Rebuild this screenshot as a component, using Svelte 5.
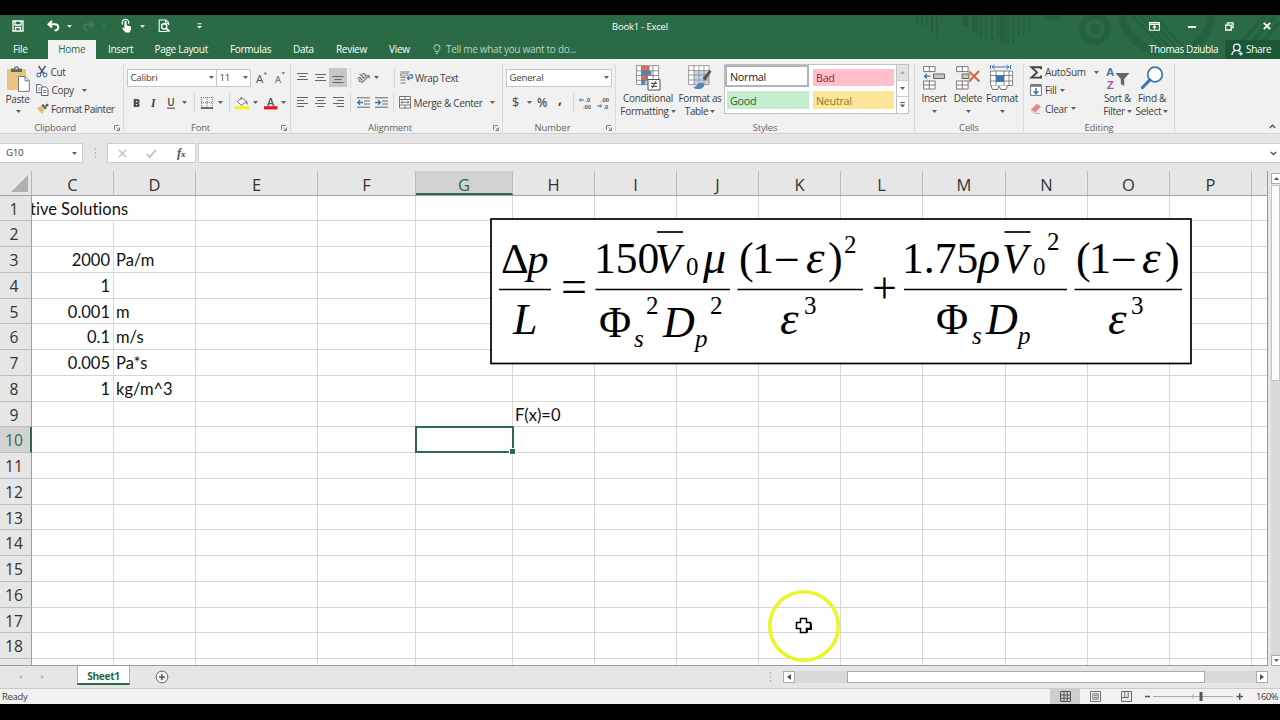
<script>
  const k = '#505050';
  const b = '#3a77b0';
  const caret = `<path d="M0 0h5L2.500 3z" fill="#606060"/>`;
  const lines = (rows) =>
    rows.map(([x1, x2, y]) => `<path d="M${x1} ${y}H${x2}" stroke="#666" stroke-width="1"/>`).join('');

  const icons = {
    caret: [5, 3, caret],
    save: [12, 12, `<path d="M1 1h10v10H1zM3 1v4h6V1M3.500 11V7.500h5V11" fill="none" stroke="#fff" stroke-width="1.300"/>`],
    undo: [13, 12, `<path d="M5 1L1.500 4.200 5 7.400M2 4.200h5.500c5 0 5 6 0 6.300" fill="none" stroke="#fff" stroke-width="2"/>`],
    redo: [13, 12, `<path d="M8 1l3.500 3.200L8 7.400M11 4.200H5.500c-5 0-5 6 0 6.300" fill="none" stroke="#447d5b" stroke-width="1.800"/>`],
    touch: [12, 14, `<path d="M3.400 7.500V3.200a1.100 1.100 0 0 1 2.200 0v3.300l4.400 1v3l-1.300 3H4.400L1.200 9.300l.8-.9 1.600.9z" fill="#fff"/><path d="M1.600 5.600A3.400 3.400 0 1 1 7.600 5" fill="none" stroke="#fff" stroke-width="1.100"/>`],
    preview: [13, 14, `<path d="M9.500 12.500H1.200V1H8l2.600 2.600V6M7.500 1v3.200h3" fill="none" stroke="#fff" stroke-width="1.100"/><circle cx="6.200" cy="7.400" r="2.600" fill="none" stroke="#fff" stroke-width="1.400"/><path d="M8 9.300l3.600 3.200" stroke="#fff" stroke-width="1.700"/>`],
    more: [5, 6, `<path d="M.5.800h4" stroke="#fff"/><path d="M0 3h5L2.500 5.600z" fill="#fff"/>`],
    ribbonOpt: [11, 9, `<path d="M.6.600h9.800v7.600H.6zM.6 2.400h9.800M5.500 7.600V4M3.700 5.600l1.800-1.800 1.800 1.800" fill="none" stroke="#fff" stroke-width="1.100"/>`],
    minimize: [8, 3, `<path d="M0 2h8" stroke="#fff" stroke-width="2"/>`],
    restore: [9, 9, `<path d="M.7 3.200h5.500v4.800H.7zM2.400 3V.9h5.600v4.800H6.400" fill="none" stroke="#fff" stroke-width="1.300"/>`],
    close: [8, 8, `<path d="M.8.800l6.400 6.400M7.200.8L.8 7.200" stroke="#fff" stroke-width="1.800"/>`],
    bulb: [8, 11, `<path d="M2.600 7.500C2.600 6 1 5.400 1 3.700a3 3 0 0 1 6 0c0 1.700-1.600 2.300-1.600 3.800zM2.700 9.300h2.600" fill="none" stroke="#b9d3c3" stroke-width="1"/>`],
    person: [13, 13, `<circle cx="5.800" cy="4.400" r="3.300" fill="none" stroke="#fff" stroke-width="1.300"/><path d="M4.300 7.300C2.500 8 1.200 9.500.8 12M7.200 7.300l1.500 1.600M9.800 8.600v4M7.800 10.600h4" fill="none" stroke="#fff" stroke-width="1.200"/>`],
    paste: [24, 26, `<path d="M1 3h19v21H1z" fill="#eac282"/><path d="M5 2.500h3c0-3 5-3 5 0h3V6H5z" fill="#666"/><path d="M9.300 2.500h2.400" stroke="#eee" stroke-width="1.500"/><path d="M12.500 10.500H19l4.300 4.300v10.600H12.500z" fill="#fff" stroke="#777"/><path d="M19 10.500v4.300h4.300" fill="none" stroke="#777"/>`],
    cut: [12, 12, `<path d="M2.500 0L8 8M9.500 0L4 8" stroke="${k}" stroke-width="1.400"/><circle cx="2.800" cy="9" r="1.900" fill="none" stroke="${b}" stroke-width="1.100"/><circle cx="9" cy="9" r="1.900" fill="none" stroke="${b}" stroke-width="1.100"/>`],
    copy: [13, 12, `<path d="M.6.600h4l2 2v6h-6z" fill="#fff" stroke="${k}" stroke-width=".9"/><path d="M5.600 3h4L12 5.300v6.200H5.600z" fill="#fff" stroke="${k}" stroke-width=".9"/><path d="M2 4h2.500M2 6h2.500M7 6.500h3.500M7 8.500h3.500" stroke="${b}" stroke-width=".8"/>`],
    brush: [13, 11, `<path d="M0 4.500l4-1.500 3.500 3.500-2 4.200C3 9.500 1.300 7.500 0 4.500z" fill="#eab97a"/><path d="M4.300 2.200L6 1l3.700 3.900-1.500 1.500zM8 2.400l2.300-2 1.600 1.600-2.200 2z" fill="#555"/>`],
    growA: [12, 13, `<text x="0" y="12" font-size="11.500" fill="#555">A</text><path d="M7.500 3.300L9.300 1l1.800 2.300z" fill="${b}"/>`],
    shrinkA: [12, 13, `<text x="1" y="12" font-size="9.500" fill="#555">A</text><path d="M7.500 1.300h3.600L9.300 3.600z" fill="${b}"/>`],
    bold: [9, 12, `<text x="1" y="9.800" font-size="10.500" font-weight="800" fill="#444">B</text>`],
    italic: [9, 12, `<text x="2" y="9.800" font-size="11.500" font-style="italic" font-weight="600" font-family="Liberation Serif" fill="#444">I</text>`],
    underline: [10, 12, `<text x="1.200" y="9" font-size="10" font-weight="600" fill="#444">U</text><path d="M1 11.200h8" stroke="#444" stroke-width="1"/>`],
    borders: [12, 12, `<path d="M.7 0v11M6 0v11M11.300 0v11M0 .6h12M0 5.600h12" stroke="#777" stroke-width="1" stroke-dasharray="1 1"/><path d="M0 11h12" stroke="#333" stroke-width="1.400"/>`],
    fill: [14, 14, `<path d="M2.500 5.500L7 1.500l4 4L6.500 9.500z" fill="#fff" stroke="#666"/><path d="M6 4V1.500" stroke="#666"/><path d="M11 4.500c2 1.500 1.800 3.500 1.200 4.500-1-.8-1.600-2.200-1.200-4.500z" fill="${b}"/><path d="M0 10.200h14v3.200H0z" fill="#f7ef20"/>`],
    fontColor: [14, 14, `<text x="3" y="9.600" font-size="11" font-weight="600" fill="#555">A</text><path d="M0 10.200h13.500v3.200H0z" fill="#e01b1b"/>`],
    top: [11, 11, lines([[0, 11, 1.5], [2, 9, 4.5], [0, 11, 7.5]])],
    middle: [11, 11, lines([[0, 11, 2.5], [2, 9, 5.5], [0, 11, 8.5]])],
    bottom: [18, 19, `<path d="M0 0h18v19H0z" fill="#c6c6c6"/>` + lines([[3.5, 14.5, 8.5], [5.5, 12.5, 11.5], [3.5, 14.5, 14.5]])],
    left: [11, 11, lines([[0, 11, 0.5], [0, 7, 3.5], [0, 11, 6.5], [0, 7, 9.5]])],
    center: [11, 11, lines([[0, 11, 0.5], [2, 9, 3.5], [0, 11, 6.5], [2, 9, 9.5]])],
    right: [11, 11, lines([[0, 11, 0.5], [4, 11, 3.5], [0, 11, 6.5], [4, 11, 9.5]])],
    orient: [14, 13, `<text x="0" y="9" font-size="9" fill="#444" transform="rotate(-42 5 7)">ab</text><path d="M4.500 12L12 4.800M9.300 4.800h2.900v2.800" fill="none" stroke="#777" stroke-width="1.100"/>`],
    outdent: [13, 12, lines([[0, 13, 0.8], [7, 13, 4], [7, 13, 7], [0, 13, 10.2]]) + `<path d="M6 5.500H1M3 3.300L.8 5.500 3 7.700" fill="none" stroke="${b}" stroke-width="1.400"/>`],
    indent: [13, 12, lines([[0, 13, 0.8], [7, 13, 4], [7, 13, 7], [0, 13, 10.2]]) + `<path d="M0 5.500h5M3.200 3.300l2.200 2.200-2.200 2.200" fill="none" stroke="${b}" stroke-width="1.400"/>`],
    wrap: [13, 13, `<path d="M.5 1h9M.5 12h5M.5 6.500h5M.5 9h5" stroke="#777"/><path d="M.5 2.800h7.500v2H.5z" fill="#fff" stroke="#777" stroke-width=".8"/><path d="M9.500 3.800h2.700v3.400H7.500M9.300 5.200L7.300 7.200l2 2" fill="none" stroke="${b}" stroke-width="1.200"/>`],
    merge: [12, 13, `<path d="M.5.500h11v11.500H.5zM.5 3.500h11M.5 9h11M6 .5v3M6 9v3" fill="#fff" stroke="#666" stroke-width=".9"/><path d="M2 6.250h8M3.500 4.800L2 6.250l1.500 1.450M8.500 4.800L10 6.250 8.500 7.700" fill="none" stroke="#555" stroke-width=".9"/>`],
    dollar: [9, 14, `<text x="1" y="11.200" font-size="12.500" fill="#444">$</text>`],
    percent: [12, 14, `<text x="0" y="11" font-size="12" font-weight="600" fill="#555">%</text>`],
    comma: [5, 8, `<text x="0" y="4.500" font-size="14" font-weight="700" fill="#444">,</text>`],
    incDec: [13, 12, `<g font-family="Liberation Sans" font-size="5.800" font-weight="700" fill="#555"><text x="6.500" y="4.800">.0</text><text x="4" y="11.600">.00</text></g><path d="M5 3H.5M2 1.300L.5 3 2 4.700" fill="none" stroke="${b}"/>`],
    decDec: [13, 12, `<g font-family="Liberation Sans" font-size="5.800" font-weight="700" fill="#555"><text x="4" y="4.800">.00</text><text x="6.500" y="11.600">.0</text></g><path d="M0 9h4.500M3 7.300L4.500 9 3 10.700" fill="none" stroke="${b}"/>`],
    condFmt: [25, 26, `<path d="M.6.600h22v19h-22z" fill="#fff"/><path d="M5.500 1h5v5h-5z" fill="#d9685d"/><path d="M5.500 6h10v4.500h-10z" fill="#4f86bd"/><path d="M5.500 10.500h6.500v4.500H5.500z" fill="#d9685d"/><path d="M5.500 15h4v4.500h-4z" fill="#4f86bd"/><path d="M10.500 1h3v5h-3z" fill="#d9685d"/><path d="M.6.600h22v19h-22zM.6 5.800h22M.6 10.500h22M.6 15.300h22M5.500.6v19M11 .6v19M17 .6v19" fill="none" stroke="#777" stroke-width=".8"/><path d="M12 14.500h12v10.500H12z" fill="#fff" stroke="#555"/><path d="M15 18.300h6M15 21.300h6M19.800 16.300l-3.600 7" stroke="#333"/>`],
    fmtTable: [24, 26, `<path d="M.6.600h20.500v19H.6z" fill="#fff"/><path d="M6 5.500h15v14H6z" fill="#c3d6e8"/><path d="M.6.600h20.500v19H.6zM.6 5.500h20.500M.6 10h20.500M.6 15h20.500M6 .6v19M11 .6v19M16 .6v19" fill="none" stroke="#888" stroke-width=".8"/><path d="M23.500 6.500l-6 9-3-2.200L21.500 5z" fill="#555"/><path d="M5 22.500c4-.5 5-5.500 9-5 2.800.7 3 4.500-.5 6-3 1-6 .8-8.500-1z" fill="#4f86bd"/>`],
    insertCells: [22, 24, `<path d="M.6.600h11.500v5H.6zM6.300.6v5M.6 15h11.500v8H.6zM6.300 15v8M.6 19h11.500" fill="#fff" stroke="#777"/><path d="M10.500 8h11v4.500h-11z" fill="#c8c8c8" stroke="#666"/><path d="M7.500 10.200H1.500M4 8l-2.400 2.200L4 12.400" fill="none" stroke="${b}" stroke-width="1.300"/>`],
    deleteCells: [25, 24, `<path d="M.6.600h11.500v5H.6zM6.300.6v5M.6 15h11.500v8H.6zM6.300 15v8M.6 19h11.500" fill="#fff" stroke="#777"/><path d="M6 8h7v4.500H6z" fill="#c8c8c8" stroke="#666"/><path d="M13 5.500l10.500 10M23 5L13 15.500" stroke="#d5693f" stroke-width="2.200"/>`],
    formatCells: [24, 26, `<path d="M2 2h17M4.500 0L2 2l2.500 2M16.500 0L19 2l-2.500 2M.5 0v4M20.500 0v4" fill="none" stroke="${b}"/><path d="M.6 6h22v14.500h-22z" fill="#fff"/><path d="M.6 6h22v14.500h-22zM.6 10.500h22M.6 16h22M6 6v14.500M14 6v14.500M19 6v14.500" fill="none" stroke="#777" stroke-width=".9"/><path d="M6 10h8v7H6z" fill="${b}"/><path d="M1 20.500l1.500 4h5L9 21l2 3.500h5l1.500-4" fill="#fff" stroke="#777"/>`],
    sigma: [12, 13, `<path d="M11 3.200V1.200H1.500L7 6.400l-5.500 5.200H11v-2" fill="none" stroke="#444" stroke-width="1.900"/>`],
    fillDown: [12, 12, `<path d="M.6.600h10.800v10.800H.6z" fill="#fff" stroke="#777"/><path d="M.6.600h10.800v2.200H.6z" fill="#777"/><path d="M6 4v5.500M3.600 7.200L6 9.600l2.400-2.400" fill="none" stroke="${b}" stroke-width="1.500"/>`],
    eraser: [12, 11, `<path d="M1 6.500L7 .8l3.800 2.600-5.500 6H3.200L1 8z" fill="#e58592"/><path d="M1 6.500l4.200 2.800-.6.800H2.800L1 8.500z" fill="#f5cdd2"/><path d="M4.500 10.400H10" stroke="#999" stroke-width=".8"/>`],
    sortFilter: [24, 24, `<g font-family="Liberation Sans" font-size="11.500" font-weight="700"><text x="0" y="10" fill="${b}">A</text><text x=".8" y="22.500" fill="#9b59a8">Z</text></g><path d="M9.500 7h14l-5.300 6v7l-3.400-2v-5z" fill="#666"/>`],
    find: [23, 24, `<circle cx="14" cy="8.500" r="7.300" fill="#fff" stroke="${b}" stroke-width="1.700"/><path d="M8.800 14L1.500 21.500" stroke="${b}" stroke-width="3.200" stroke-linecap="round"/>`],
    launch: [6, 6, `<path d="M.5 5V.5H5M2.500 2.500l2.500 2.500M5.500 2.500v3h-3" fill="none" stroke="#777" stroke-width=".9"/>`],
    collapse: [7, 5, `<path d="M.8 4l2.700-2.700L6.200 4" fill="none" stroke="#555" stroke-width="1.400"/>`],
    chevron: [7, 5, `<path d="M.8 1l2.700 2.500L6.200 1" fill="none" stroke="#555" stroke-width="1.500"/>`],
    dots: [3, 11, `<path d="M1.500 0v11" stroke="#aaa" stroke-width="1.200" stroke-dasharray="1.400 2.600"/>`],
    cancel: [9, 9, `<path d="M.8.800l7.400 7.400M8.200.8L.8 8.200" stroke="#bdbdbd" stroke-width="1.300"/>`],
    check: [11, 9, `<path d="M.8 5l3 3L10 .8" fill="none" stroke="#bdbdbd" stroke-width="1.600"/>`],
    fx: [11, 13, `<text x="1" y="10" font-size="12.500" font-style="italic" font-weight="700" font-family="Liberation Serif" fill="#555">f</text><text x="5" y="10.300" font-size="9" font-style="italic" font-weight="700" font-family="Liberation Serif" fill="#444">x</text>`],
    corner: [17, 17, `<path d="M17 0v17H0z" fill="#b1b1b1"/>`],
    triL: [4, 6, `<path d="M4 0v6L0 3z" fill="#555"/>`],
    triR: [4, 6, `<path d="M0 0v6l4-3z" fill="#555"/>`],
    triLs: [3, 4, `<path d="M3 0v4L0 2z" fill="#b8b8b8"/>`],
    triRs: [3, 4, `<path d="M0 0v4l3-2z" fill="#b8b8b8"/>`],
    triU: [5, 3, `<path d="M2.500 0L5 3H0z" fill="#555"/>`],
    triUs: [5, 3, `<path d="M2.500 0L5 3H0z" fill="#aaa"/>`],
    galleryMore: [5, 6, `<path d="M0 .6h5" stroke="#555"/><path d="M0 2.500h5L2.500 5.500z" fill="#555"/>`],
    plusCircle: [14, 14, `<circle cx="7" cy="7" r="5.900" fill="#f4f4f4" stroke="#666"/><path d="M7 4v6M4 7h6" stroke="#555" stroke-width="1.400"/>`],
    normalView: [11, 11, `<path d="M.5.500h10v10H.5zM.5 4h10M.5 7.300h10M4 .5v10M7.300.5v10" fill="none" stroke="#555"/>`],
    pageView: [11, 11, `<path d="M.5.500h10v10H.5zM2.800 2.800h5.400v5.400H2.800zM4 4.600h3M4 6.400h3" fill="none" stroke="#666" stroke-width=".9"/>`],
    breakView: [11, 11, `<path d="M.5 10.500V.5h10v10zM3.800.5v6M7.200.5v6M.5 6.500h6.700" fill="none" stroke="#666"/><path d="M1 7h9v3H1z" fill="#e8e8e8"/>`]
  };

  const tabs = [
    ['Insert', 46.5], ['Page Layout', 75.5], ['Formulas', 63], ['Data', 43], ['Review', 53], ['View', 43]
  ];

  // [gap before, width, icon]
  const fontRow = [
    [8, 9, 'bold'], [8, 9, 'italic'], [8, 10, 'underline'], [6, 5, 'caret'], [6.5, 1, 'sep'],
    [6, 12, 'borders'], [5, 5, 'caret'], [6.5, 1, 'sep'], [5, 14, 'fill'], [4, 5, 'caret'],
    [5.5, 14, 'fontColor'], [3, 5, 'caret']
  ];
  const alignTop = [[5.5, 11, 'top'], [7, 11, 'middle'], [3.5, 18, 'bottom'], [3, 1, 'sep'], [6, 14, 'orient'], [2.5, 5, 'caret'], [15.5, 1, 'sep']];
  const alignBottom = [[5.5, 11, 'left'], [7, 11, 'center'], [7, 11, 'right'], [6.5, 1, 'sep'], [6, 13, 'outdent'], [5, 13, 'indent'], [4.5, 1, 'sep']];
  const numberRow = [[8, 9, 'dollar'], [7, 5, 'caret'], [5, 12, 'percent'], [9, 5, 'comma'], [10, 1, 'sep'], [5, 13, 'incDec'], [5, 13, 'decDec']];

  const columns = [
    ['C', 82], ['D', 82], ['E', 122], ['F', 98], ['G', 97], ['H', 82], ['I', 82], ['J', 82],
    ['K', 82], ['L', 82], ['M', 83], ['N', 82], ['O', 82], ['P', 82], ['', 16]
  ];
  const rows = Array.from({ length: 19 }, (_, i) => i + 1);
  const cells = {
    C1: ['tive Solutions', 'spill'], C3: ['2000', 'num'], D3: ['Pa/m'], C4: ['1', 'num'],
    C5: ['0.001', 'num'], D5: ['m'], C6: ['0.1', 'num'], D6: ['m/s'], C7: ['0.005', 'num'],
    D7: ['Pa*s'], C8: ['1', 'num'], D8: ['kg/m^3'], H9: ['F(x)=0']
  };

  // [text, x, baseline, size, italic]
  const glyphs = [
    ['Δ', 501, 273, 43], ['p', 527, 273, 43, 1], ['L', 513, 334, 44, 1], ['=', 561, 302, 46],
    ['150', 594, 273, 43.5], ['V', 655, 273, 42, 1], ['0', 686, 275, 25], ['μ', 703, 273, 46, 1],
    ['Φ', 599, 337, 44], ['s', 634, 347, 25, 1], ['2', 646, 314, 25], ['D', 663, 337, 44, 1], ['p', 695, 347, 25, 1], ['2', 710, 314, 25],
    ['(', 739, 273, 44], ['1', 752, 273, 44], ['−', 774, 274.5, 46], ['ε', 806, 273, 47, 1], [')', 828, 273, 44], ['2', 844, 253, 25],
    ['ε', 780, 334, 47, 1], ['3', 804, 314, 25], ['+', 872, 303, 44],
    ['1.75', 902, 273, 43.5], ['ρ', 978, 273, 46, 1], ['V', 1002, 273, 42, 1], ['0', 1033, 275, 25], ['2', 1047, 250, 25],
    ['Φ', 936, 334, 44], ['s', 972, 344, 25, 1], ['D', 986, 334, 44, 1], ['p', 1018, 344, 25, 1],
    ['(', 1076, 273, 44], ['1', 1089, 273, 44], ['−', 1111, 274.5, 46], ['ε', 1142, 273, 47, 1], [')', 1165, 273, 44],
    ['ε', 1108, 334, 47, 1], ['3', 1131, 314, 25]
  ];
  const bars = [[499, 551, 289.5], [595.5, 730, 289.5], [737.5, 863, 289.5], [904, 1067, 289.5], [1074.5, 1182, 289.5], [657, 683, 232], [1004.5, 1030.5, 232]];
</script>

{#snippet icon(name)}
  <svg class="icon" width={icons[name][0]} height={icons[name][1]} viewBox="0 0 {icons[name][0]} {icons[name][1]}">{@html icons[name][2]}</svg>
{/snippet}

{#snippet strip(items)}
  <div class="strip">
    {#each items as [gap, w, name]}
      {#if name === 'sep'}
        <i class="vsep" style:margin-left="{gap}px"></i>
      {:else}
        <span class="slot" style:margin-left="{gap}px" style:width="{w}px">{@render icon(name)}</span>
      {/if}
    {/each}
  </div>
{/snippet}

<div class="screen">
  <header>
    <svg class="deco" width="380" height="44" viewBox="0 0 380 44">
      <g stroke="#24613e" fill="none">
        <path d="M17 0v10M22 0v12M27 0v10M32 0v17M37 0v24M42 0v7M81 0v22M86 0v26M92 0v27M98 0v22M108 0v30M113 0v28M119 0v22M124 0v20M129 0v15" stroke-width="2" />
        <path d="M65 0v12M75 0v18M103 0v28" stroke-width="6" />
        <circle cx="195" cy="14" r="13" stroke-width="6" />
        <circle cx="195" cy="14" r="4.500" fill="#24613e" />
        <circle cx="153" cy="-7" r="10" stroke-width="5" />
        <path d="M222 0c3 20 16 32 36 37M312 0c-3 18-12 30-28 37" stroke-width="8" />
        <path d="M232 0l32 34M239 0l32 34M246 0l34 36M253 0l34 36" stroke-width="2.500" />
        <path d="M330 40L366 0M340 40L376 0M350 40l30-33" stroke-width="4" />
      </g>
    </svg>
    <div class="titlebar">
      <div class="quick">
        <span class="q1">{@render icon('save')}</span>
        <span class="q2">{@render icon('undo')}<svg class="icon" width="5" height="3" viewBox="0 0 5 3"><path d="M0 0h5L2.500 3z" fill="#d9e6de" /></svg></span>
        <span class="q3">{@render icon('redo')}<svg class="icon" width="4" height="3" viewBox="0 0 5 3"><path d="M0 0h5L2.500 3z" fill="#447d5b" /></svg></span>
        <span class="q4">{@render icon('touch')}<svg class="icon" width="5" height="3" viewBox="0 0 5 3"><path d="M0 0h5L2.500 3z" fill="#d9e6de" /></svg></span>
        <span class="q5">{@render icon('preview')}</span>
        <span class="q6">{@render icon('more')}</span>
      </div>
      <span class="doc">Book1 - Excel</span>
      <div class="winctl">
        {@render icon('ribbonOpt')}{@render icon('minimize')}{@render icon('restore')}{@render icon('close')}
      </div>
    </div>
    <nav>
      <span class="file">File</span>
      <span class="home">Home</span>
      {#each tabs as [label, w]}
        <span class="tab" style:width="{w}px">{label}</span>
      {/each}
      <span class="tell">{@render icon('bulb')}Tell me what you want to do...</span>
      <span class="user">Thomas Dziubla</span>
      <span class="share">{@render icon('person')}Share</span>
    </nav>
  </header>

  <section class="ribbon">
    <div class="group g-clip">
      <div class="body">
        <div class="pasteBtn">{@render icon('paste')}<span>Paste</span>{@render icon('caret')}</div>
        <div class="clipList">
          <div>{@render icon('cut')}<span>Cut</span></div>
          <div>{@render icon('copy')}<span>Copy</span><em>{@render icon('caret')}</em></div>
          <div>{@render icon('brush')}<span class="fp">Format Painter</span></div>
        </div>
      </div>
      <footer><span>Clipboard</span>{@render icon('launch')}</footer>
    </div>

    <div class="group g-font">
      <div class="body col">
        <div class="line">
          <div class="combo c1"><span>Calibri</span>{@render icon('caret')}</div>
          <div class="combo c2"><span>11</span>{@render icon('caret')}</div>
          <span class="grow">{@render icon('growA')}{@render icon('shrinkA')}</span>
        </div>
        <div class="line">{@render strip(fontRow)}</div>
      </div>
      <footer><span>Font</span>{@render icon('launch')}</footer>
    </div>

    <div class="group g-align">
      <div class="body col">
        <div class="line">{@render strip(alignTop)}<span class="wrapBtn">{@render icon('wrap')}<span>Wrap Text</span></span></div>
        <div class="line">{@render strip(alignBottom)}<span class="wrapBtn">{@render icon('merge')}<span class="mc">Merge &amp; Center</span>{@render icon('caret')}</span></div>
      </div>
      <footer><span>Alignment</span>{@render icon('launch')}</footer>
    </div>

    <div class="group g-num">
      <div class="body col">
        <div class="line"><div class="combo c3"><span>General</span>{@render icon('caret')}</div></div>
        <div class="line">{@render strip(numberRow)}</div>
      </div>
      <footer><span>Number</span>{@render icon('launch')}</footer>
    </div>

    <div class="group g-styles">
      <div class="body">
        <div class="big b-cond">{@render icon('condFmt')}<span>Conditional</span><span>Formatting {@render icon('caret')}</span></div>
        <div class="big b-table">{@render icon('fmtTable')}<span>Format as</span><span>Table {@render icon('caret')}</span></div>
        <div class="gallery">
          <div class="swatches">
            <span class="normal">Normal</span><span class="bad">Bad</span>
            <span class="good">Good</span><span class="neutral">Neutral</span>
          </div>
          <div class="gscroll">
            <span class="off">{@render icon('triUs')}</span><span>{@render icon('caret')}</span><span>{@render icon('galleryMore')}</span>
          </div>
        </div>
      </div>
      <footer><span>Styles</span></footer>
    </div>

    <div class="group g-cells">
      <div class="body">
        <div class="big w36">{@render icon('insertCells')}<span>Insert</span><span>{@render icon('caret')}</span></div>
        <div class="big w32">{@render icon('deleteCells')}<span>Delete</span><span>{@render icon('caret')}</span></div>
        <div class="big w36">{@render icon('formatCells')}<span>Format</span><span>{@render icon('caret')}</span></div>
      </div>
      <footer><span>Cells</span></footer>
    </div>

    <div class="group g-edit">
      <div class="body">
        <div class="editList">
          <div>{@render icon('sigma')}<span class="as">AutoSum</span>{@render icon('caret')}</div>
          <div>{@render icon('fillDown')}<span>Fill</span>{@render icon('caret')}</div>
          <div>{@render icon('eraser')}<span>Clear</span>{@render icon('caret')}</div>
        </div>
        <div class="big b-sort">{@render icon('sortFilter')}<span>Sort &amp;</span><span>Filter {@render icon('caret')}</span></div>
        <div class="big b-find">{@render icon('find')}<span>Find &amp;</span><span>Select {@render icon('caret')}</span></div>
      </div>
      <footer><span>Editing</span></footer>
    </div>
    <div class="fold">{@render icon('collapse')}</div>
  </section>

  <section class="formula">
    <div class="namebox"><span>G10</span>{@render icon('caret')}</div>
    <span class="dots">{@render icon('dots')}</span>
    <div class="fbtns">{@render icon('cancel')}{@render icon('check')}{@render icon('fx')}</div>
    <div class="finput">{@render icon('chevron')}</div>
  </section>

  <main>
    <div class="sheet">
      <div class="heads">
        <span class="cornerBox">{@render icon('corner')}</span>
        {#each columns as [name, w]}
          <span class="ch" class:on={name === 'G'} style:width="{w}px">{name}</span>
        {/each}
      </div>
      {#each rows as r}
        <div class="row">
          <span class="rh" class:on={r === 10}>{r < 19 ? r : ''}</span>
          {#each columns as [name, w]}
            {@const cell = cells[name + r]}
            <span class="cell {cell?.[1] ?? ''}" style:width="{w}px">{cell?.[0] ?? ''}</span>
          {/each}
        </div>
      {/each}
      <div class="selection"><i></i></div>
      <svg class="equation" width="702" height="147" viewBox="490 218 702 147">
        <rect x="491" y="219" width="700" height="144.500" fill="#fff" stroke="#000" stroke-width="1.700" />
        {#each bars as [x1, x2, y]}
          <path d="M{x1} {y}H{x2}" stroke="#000" stroke-width="1.700" />
        {/each}
        {#each glyphs as [t, x, y, size, it]}
          <text {x} {y} font-size={size} font-style={it ? 'italic' : 'normal'}>{t}</text>
        {/each}
      </svg>
    </div>
    <div class="vscroll">
      <span class="vbtn">{@render icon('triU')}</span>
      <span class="vthumb"></span>
      <span class="vtrack"></span>
      <span class="vbtn">{@render icon('caret')}</span>
    </div>
  </main>

  <section class="sheets">
    <span class="nav">{@render icon('triLs')}{@render icon('triRs')}</span>
    <span class="sheetTab">Sheet1</span>
    <span class="add">{@render icon('plusCircle')}</span>
    <span class="hdots">{@render icon('dots')}</span>
    <div class="hscroll">
      <span class="hbtn">{@render icon('triL')}</span>
      <span class="htrack"><i></i></span>
      <span class="hbtn">{@render icon('triR')}</span>
    </div>
  </section>

  <section class="status">
    <span class="ready">Ready</span>
    <span class="view on">{@render icon('normalView')}</span>
    <span class="view">{@render icon('pageView')}</span>
    <span class="view">{@render icon('breakView')}</span>
    <svg class="zoom" width="98" height="13" viewBox="0 0 98 13">
      <path d="M0 6.500h5" stroke="#555" stroke-width="1.500" />
      <path d="M8 6.500h80" stroke="#aaa" />
      <path d="M48 4v5" stroke="#aaa" />
      <path d="M56 2v9" stroke="#555" stroke-width="3" />
      <path d="M91.500 6.500h6.500M94.700 3.200v6.600" stroke="#555" stroke-width="1.500" />
    </svg>
    <span class="pct">160%</span>
  </section>

  <svg class="pointer" width="74" height="74" viewBox="0 0 74 74">
    <circle cx="37" cy="37" r="34.300" fill="none" stroke="#ebf52a" stroke-width="3.600" />
    <path d="M33.500 29.500h6v4h4v6h-4v4h-6v-4h-4v-6h4z" fill="#fff" stroke="#000" stroke-width="1.500" />
    <path d="M40.300 43.500v-3.200h4v-6" fill="none" stroke="#000" stroke-width="1.200" />
  </svg>
</div>

<style>
  :global(body) { background: #000; }
  .screen { position: relative; display: flex; flex-direction: column; box-sizing: border-box; width: 1280px; height: 720px; padding: 15px 0 16px; overflow: hidden; background: #000; color: #404040; font: 10px/12px 'Open Sans', 'Noto Sans', sans-serif; letter-spacing: -.3px; white-space: nowrap; }
  .screen * { box-sizing: border-box; }
  .icon { display: block; flex: none; overflow: visible; letter-spacing: 0; }
  header { position: relative; height: 44px; flex: none; background: #2a6b45; color: #fff; }
  .deco { position: absolute; right: 0; top: 0; }
  .titlebar { position: relative; display: flex; height: 25px; }
  .quick { display: flex; align-items: center; width: 612px; padding-left: 12px; height: 22px; }
  .quick span { display: flex; align-items: center; gap: 7px; }
  .q1 { width: 35px; } .q2 { width: 35px; } .q3 { width: 39px; } .q4 { width: 37px; } .q5 { width: 39px; }
  .doc { font-size: 9.500px; letter-spacing: -.2px; line-height: 24px; flex: 1; }
  .winctl { display: flex; align-items: center; gap: 29px; height: 22px; padding-right: 9px; }
  .winctl .icon:first-child { margin-right: -1px; }
  nav { position: relative; display: flex; height: 19px; line-height: 19px; }
  .file { width: 47.500px; padding-left: 13px; }
  .home { width: 48.500px; background: #f1f1f1; color: #2a6b45; text-align: center; }
  .tab { flex: none; padding-left: 12px; }
  .tell { display: flex; align-items: center; gap: 5px; margin-left: 13px; color: #b9d3c3; flex: 1; }
  .user { width: 76px; letter-spacing: -.4px; }
  .share { display: flex; align-items: center; gap: 2px; width: 55px; padding-left: 6px; background: #1c5836; }
  .ribbon { display: flex; flex: none; height: 75px; background: #f1f1f1; border-bottom: 1px solid #d2d2d2; }
  .group { display: flex; flex-direction: column; flex: none; margin-top: 4px; height: 69px; border-right: 1px solid #dadada; }
  .body { display: flex; height: 57px; flex: none; }
  .body.col { flex-direction: column; padding-top: 2px; }
  .line { display: flex; flex: none; align-items: center; height: 25px; }
  .group footer { display: flex; align-items: center; height: 14px; padding-top: 2px; color: #666; font-size: 9.500px; letter-spacing: -.15px; }
  .group footer span { flex: 1; text-align: center; }
  .group footer .icon { margin-right: 3px; }
  .g-clip footer span, .g-font footer span, .g-align footer span, .g-num footer span { padding-right: 4px; }
  .g-clip { width: 124px; } .g-font { width: 167px; } .g-align { width: 212px; } .g-num { width: 113px; }
  .g-styles { width: 299px; } .g-cells { width: 109px; } .g-edit { width: 151px; }
  .strip { display: flex; align-items: center; }
  .slot { display: flex; justify-content: center; }
  .vsep { width: 1px; height: 20px; background: #d8d8d8; }
  .pasteBtn { display: flex; flex-direction: column; align-items: center; width: 35px; padding: 3px 0 0 1px; }
  .pasteBtn span { margin: 1px 1px 5px 0; }
  .clipList { padding: 0 0 0 1px; }
  .clipList div { display: flex; align-items: center; height: 18.300px; gap: 2.500px; }
  .clipList em { margin-left: 6px; }
  .clipList div:nth-child(3) { padding-left: 1px; gap: 1px; }
  .fp { letter-spacing: -.45px; }
  .combo { display: flex; align-items: center; justify-content: space-between; height: 18px; padding: 0 2.500px; border: 1px solid #c6c6c6; background: #fff; font-size: 9.600px; letter-spacing: -.2px; }
  .c1 { width: 90px; margin-left: 3px; } .c2 { width: 34px; border-left: 0; } .c3 { width: 106px; margin-left: 3px; }
  .grow { display: flex; gap: 6px; margin-left: 5px; }
  .wrapBtn { display: flex; align-items: center; gap: 2px; margin-left: 5px; letter-spacing: -.5px; }
  .wrapBtn .mc { margin: 0 5px 0 1px; letter-spacing: -.32px; }
  .big { display: flex; flex-direction: column; align-items: center; padding-top: 2px; }
  .big :global(> svg) { height: 26px; margin-bottom: .5px; }
  .big span { display: flex; align-items: center; gap: 2px; height: 13px; min-height: 13px; }
  .b-cond { width: 64px; } .b-table { width: 40px; } .b-sort { width: 35px; margin-left: 3px; } .b-find { width: 34px; }
  .b-table span { letter-spacing: -.4px; }
  .gallery { display: flex; margin-left: 4px; margin-top: 1px; width: 185px; height: 50px; border: 1px solid #c2c2c2; background: #fff; }
  .swatches { display: grid; grid-template-columns: 84px 81px; grid-template-rows: 22px 18px; gap: 4px 4px; flex: 1; }
  .swatches span { padding-left: 3px; line-height: 19px; font-size: 10.800px; }
  .swatches .normal { border: 2px solid #b0b3b8; line-height: 20px; color: #222; }
  .swatches .bad { background: #ffc0cb; color: #9a2634; margin-top: 4px; height: 17px; line-height: 18px; }
  .good { background: #c6eccf; color: #1d6b2d; margin-left: 2px; }
  .neutral { background: #fbe699; color: #95742a; }
  .gscroll { width: 12px; border-left: 1px solid #c2c2c2; }
  .gscroll span { display: flex; align-items: center; justify-content: center; height: 16px; border-bottom: 1px solid #d0d0d0; }
  .gscroll span:last-child { border: 0; }
  .gscroll .off { background: #e2e2e2; }
  .g-cells .body { padding-left: 1px; }
  .w36 { width: 36px; } .w32 { width: 32px; }
  .editList { width: 73px; padding-left: 6px; }
  .editList div { display: flex; align-items: center; height: 18.300px; gap: 3px; }
  .as { margin-right: 5px; }
  .fold { display: flex; flex: 1; justify-content: flex-end; align-items: flex-end; padding: 0 4px 4px; }
  .formula { display: flex; flex: none; height: 37px; padding-top: 9px; background: #e6e6e6; font-size: 9.800px; }
  .formula > div { display: flex; align-items: center; height: 20px; background: #fff; border: 1px solid #cdcdcd; }
  .formula .namebox { width: 83px; padding: 0 5px 0 6px; justify-content: space-between; border-left: 0; }
  .dots { width: 24px; padding: 5px 0 0 11px; }
  .fbtns { width: 89px; padding-left: 10px; gap: 19px; }
  .formula .finput { flex: 1; margin-left: 2px; border-right: 0; justify-content: flex-end; padding-right: 3px; }
  main { display: flex; flex: none; height: 495px; background: #e6e6e6; }
  .sheet { position: relative; width: 1268px; height: 495px; overflow: hidden; border-right: 1px solid #9b9b9b; border-bottom: 1px solid #9b9b9b; background: #fff; letter-spacing: 0; }
  .heads { display: flex; height: 24.500px; background: #e6e6e6; border-bottom: 1px solid #a0a0a0; font-size: 16.500px; color: #333; }
  .cornerBox { display: flex; justify-content: flex-end; align-items: flex-end; width: 32px; flex: none; padding: 0 3px 3px 0; border-right: 1px solid #b5b5b5; }
  .ch { flex: none; padding-top: 1px; text-align: center; line-height: 25px; border-right: 1px solid #bcbcbc; }
  .ch.on { background: #d2d2d2; color: #2a6b45; border-bottom: 2px solid #2a6b45; }
  .row { display: flex; height: 25.760px; }
  .rh { width: 32px; flex: none; padding-right: 3px; background: #e6e6e6; border-right: 1px solid #a0a0a0; border-bottom: 1px solid #bcbcbc; text-align: center; font-size: 15.700px; line-height: 27px; color: #333; }
  .rh.on { background: #d2d2d2; color: #2a6b45; border-right: 2px solid #2a6b45; padding-right: 2px; }
  .cell { flex: none; padding: 0 3px 0 2px; border-right: 1px solid #d6d6d6; border-bottom: 1px solid #d6d6d6; color: #111; font: 16.500px/27px Lato, sans-serif; font-variant-ligatures: none; }
  .cell.num { text-align: right; }
  .cell.spill { padding-left: 0; text-indent: -2px; border-right-color: transparent; overflow: visible; clip-path: inset(0 -30px 0 0); }
  .selection { position: absolute; left: 415px; top: 254.500px; width: 99px; height: 27.500px; border: 2px solid #2c6b49; }
  .selection i { position: absolute; right: -3px; bottom: -3px; width: 5px; height: 5px; background: #2c6b49; outline: 1px solid #fff; }
  .equation { position: absolute; left: 490px; top: 47px; font-family: 'Liberation Serif', serif; }
  .vscroll { display: flex; flex-direction: column; width: 12px; padding: 2px 0 0 3px; }
  .vbtn { display: flex; flex: none; align-items: center; justify-content: center; width: 11px; height: 11px; background: #fff; border: 1px solid #ababab; }
  .vthumb { height: 196px; margin-top: 1px; background: #fff; border: 1px solid #c4c4c4; }
  .vtrack { flex: 1; background: #d9d9d9; }
  .sheets { display: flex; flex: none; height: 23px; background: #e6e6e6; border-bottom: 1px solid #c9c9c9; }
  .nav { display: flex; align-items: center; gap: 19px; width: 77px; padding-left: 19px; }
  .sheetTab { width: 53px; height: 19px; border: 1px solid #b0b0b0; border-top: 0; border-bottom: 2px solid #2a6b45; background: #fff; color: #2a6b45; font-weight: 700; font-size: 10.200px; letter-spacing: -.35px; line-height: 21px; text-align: center; }
  .add { padding: 4px 0 0 25px; }
  .hdots { flex: 1; display: flex; justify-content: flex-end; padding-top: 6px; }
  .hscroll { display: flex; width: 485px; margin: 5px 12px 0 11px; height: 12px; }
  .hbtn { display: flex; flex: none; align-items: center; justify-content: center; width: 12px; background: #fff; border: 1px solid #ababab; }
  .htrack { flex: 1; padding: 0 51px 0 52px; background: #d9d9d9; }
  .htrack i { display: block; height: 12px; background: #fff; border: 1px solid #ababab; }
  .status { display: flex; flex: none; align-items: center; height: 15px; background: #f1f1f1; font-size: 9.500px; }
  .ready { flex: 1; padding-left: 2px; }
  .view { display: flex; width: 31px; height: 15px; align-items: center; justify-content: center; }
  .view.on { background: #cfcfcf; width: 30px; }
  .zoom { flex: none; margin: 0 0 0 3px; }
  .pct { flex: none; width: 37px; padding-left: 13px; letter-spacing: -.5px; }
  .pointer { position: absolute; left: 767px; top: 589px; }
</style>
